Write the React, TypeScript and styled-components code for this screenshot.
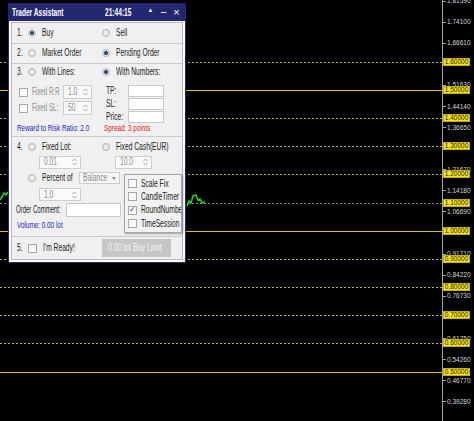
import React from 'react';
import styled, { createGlobalStyle } from 'styled-components';

const UI_FONT = `"Liberation Sans", Arial, sans-serif`;
const AXIS_FONT = `"Liberation Sans", "DejaVu Sans", sans-serif`;

const GlobalStyle = createGlobalStyle`
    html, body {
        margin: 0;
        padding: 0;
        background: #000;
    }
    body {
        overflow: hidden;
    }
    * {
        box-sizing: border-box;
    }
`;

// chart scale: 281.6px per 1.0 of price, 1.50000 sits at y = 90
const priceToY = (price: number) => 90 + (1.5 - price) * 281.6;

const LEVELS = [1.6, 1.5, 1.4, 1.3, 1.2, 1.1, 1.0, 0.9, 0.8, 0.7, 0.6, 0.5];
const TICKS = Array.from({ length: 20 }, (_, i) => 1.8159 - i * 0.0749).filter(
    (tick) => !LEVELS.some((level) => Math.abs(priceToY(level) - priceToY(tick)) < 3.5)
);

type LevelKind = 'solid' | 'dotted' | 'muted';

const levelKind = (price: number): LevelKind => {
    const tenth = Math.round(price * 10);
    if (tenth % 5 === 0) return 'solid';
    if (tenth === 11) return 'muted';
    return 'dotted';
};

/* ---------- chart ---------- */

const Chart = styled.div`
    position: relative;
    display: flex;
    width: 474px;
    height: 421px;
    background: #000;
    overflow: hidden;
`;

const Plot = styled.div`
    position: relative;
    flex: 0 0 442px;
`;

const Axis = styled.div`
    position: relative;
    flex: 1;
    border-left: 1px solid #a3a3a3;
`;

const LevelLine = styled.div<{ $kind: LevelKind }>`
    position: absolute;
    left: 0;
    right: 0;
    height: 1px;
    background: ${({ $kind }) =>
        $kind === 'solid'
            ? '#d6bf1c'
            : `repeating-linear-gradient(90deg, ${
                  $kind === 'muted' ? '#8f8f7a' : '#c2ae42'
              } 0 2px, transparent 2px 4px)`};
`;

const Candles = styled.svg`
    position: absolute;
    left: 0;
    top: 0;
`;

const Tick = styled.div`
    position: absolute;
    left: 0;
    display: flex;
    align-items: center;
    gap: 1px;
    height: 8px;
    margin-top: -4px;
    color: #d4d4d4;
    font: 6.5px/8px ${AXIS_FONT};
    white-space: nowrap;

    &::before {
        content: '';
        width: 3px;
        height: 1px;
        background: #a3a3a3;
    }
`;

const PriceTag = styled.div`
    position: absolute;
    left: 0;
    width: 27px;
    height: 8px;
    margin-top: -4px;
    display: flex;
    align-items: center;
    justify-content: center;
    background: #f3e227;
    border: 1px solid #c4ac00;
    color: #1b1b00;
    font: 6.5px/1 ${AXIS_FONT};
`;

/* ---------- trader window ---------- */

// the terminal draws its dialog text in a tightly condensed face
const Txt = styled.span<{ $sx?: number }>`
    display: inline-block;
    flex: 0 1 auto;
    min-width: 0;
    white-space: nowrap;
    transform: scaleX(${({ $sx }) => $sx ?? 0.67});
    transform-origin: left center;
`;

const Window = styled.div`
    position: absolute;
    left: 8px;
    top: 3px;
    width: 178px;
    border: 1px solid #22276f;
    background: #fdfdfd;
    font: 10px/1 ${UI_FONT};
    color: #1e1e1e;
`;

const TitleBar = styled.div`
    display: flex;
    align-items: center;
    height: 17px;
    padding: 0 2px 0 3px;
    background: #22276f;
    color: #fff;
    font-size: 11px;
    font-weight: bold;
`;

const TitleText = styled.div`
    flex: 0 0 93px;
    display: flex;
`;

const TitleButtons = styled.div`
    display: flex;
    margin-left: auto;
`;

const TitleButton = styled.span<{ $size: number }>`
    width: 13px;
    text-align: center;
    font-size: ${({ $size }) => $size}px;
    font-weight: normal;
`;

const Body = styled.div`
    padding: 1px 2px 2px;
`;

const Frame = styled.div`
    border: 1px solid #bababa;
    background: #f0f0f0;
`;

const Section = styled.div<{ $h: number; $last?: boolean }>`
    height: ${({ $h }) => $h}px;
    padding-left: 5px;
    border-bottom: ${({ $last }) => ($last ? 'none' : '1px solid #cacaca')};
`;

const OptionRow = styled.div<{ $h?: number; $top?: number }>`
    display: grid;
    grid-template-columns: 11px 74px 1fr;
    align-items: center;
    height: ${({ $h }) => $h ?? 16}px;
    margin-top: ${({ $top }) => $top ?? 0}px;
`;

const Option = styled.label<{ $width?: number }>`
    display: flex;
    align-items: center;
    gap: 6px;
    white-space: nowrap;
    ${({ $width }) => ($width ? `flex: none; width: ${$width}px;` : '')}
`;

const Radio = styled.span<{ $on?: boolean }>`
    flex: none;
    width: 8px;
    height: 8px;
    border-radius: 50%;
    border: 1px solid #b6b6b6;
    background: ${({ $on }) =>
        $on
            ? 'radial-gradient(circle, #35506b 0 1.8px, #dde5ec 2.3px)'
            : 'radial-gradient(circle, #ececec 0 2px, #dcdcdc 3px)'};
`;

const Check = styled.span`
    flex: none;
    display: flex;
    align-items: center;
    justify-content: center;
    width: 9px;
    height: 9px;
    border: 1px solid #a8a8a8;
    background: #fafafa;
    color: #2b3f8c;
    font-size: 8px;
`;

const Spin = styled.div<{ $w: number; $h?: number; $left?: number }>`
    display: flex;
    align-items: center;
    justify-content: space-between;
    width: ${({ $w }) => $w}px;
    height: ${({ $h }) => $h ?? 13}px;
    margin-left: ${({ $left }) => $left ?? 0}px;
    padding: 0 3px 0 4px;
    border: 1px solid #cdcdcd;
    background: #f9f9f9;
    color: #8d8d8d;
`;

const Split = styled.div`
    display: grid;
    grid-template-columns: 85px 1fr;
    margin-top: 4px;
`;

const LeftStack = styled.div`
    padding-left: 2px;
`;

const CheckRow = styled.div`
    display: grid;
    grid-template-columns: 13px 31px 29px;
    align-items: center;
    height: 16px;
    color: #8f8f8f;
`;

const RightStack = styled.div`
    padding-left: 4px;
`;

const FieldRow = styled.div`
    display: grid;
    grid-template-columns: 22px 36px;
    align-items: center;
    height: 13px;
`;

const TextBox = styled.div<{ $w: number; $h: number }>`
    flex: none;
    width: ${({ $w }) => $w}px;
    height: ${({ $h }) => $h}px;
    border: 1px solid #c9c9c9;
    background: #fff;
`;

const InfoRow = styled.div`
    display: grid;
    grid-template-columns: 87px 1fr;
    align-items: center;
    height: 10px;
`;

const Note = styled(Txt)<{ $tone: 'blue' | 'red' }>`
    color: ${({ $tone }) => ($tone === 'blue' ? '#1f22c8' : '#e0231f')};
    font-size: 9.5px;
`;

const FlowRow = styled.div<{ $h: number; $top: number; $left: number }>`
    display: flex;
    align-items: center;
    height: ${({ $h }) => $h}px;
    margin-top: ${({ $top }) => $top}px;
    padding-left: ${({ $left }) => $left}px;
`;

const Select = styled.div`
    display: flex;
    align-items: center;
    width: 41px;
    height: 12px;
    padding: 0 3px;
    border: 1px solid #cdcdcd;
    background: #f7f7f7;
    color: #8d8d8d;
`;

const Caret = styled.span`
    flex: none;
    margin-left: auto;
    width: 0;
    height: 0;
    border-left: 2.5px solid transparent;
    border-right: 2.5px solid transparent;
    border-top: 3px solid #8d8d8d;
`;

const CommentLabel = styled.div`
    flex: none;
    display: flex;
    width: 50px;
    margin-left: -1px;
`;

const ActionButton = styled.div`
    display: flex;
    align-items: center;
    width: 69px;
    height: 18px;
    padding-left: 6px;
    background: #c6c6c6;
    color: #f4f4f4;
    white-space: pre;
`;

/* ---------- indicators popup ---------- */

const Popup = styled.div`
    position: absolute;
    left: 124px;
    top: 174px;
    width: 58px;
    height: 59px;
    padding: 2px 0 0 3px;
    overflow: hidden;
    background: #f2f2f2;
    border: 1px solid #a6a6a6;
    box-shadow: 1px 1px 2px rgba(0, 0, 0, 0.35);
    font: 10px/1 ${UI_FONT};
    color: #222;
`;

const PopupItem = styled.div`
    display: flex;
    align-items: center;
    gap: 4px;
    height: 13.3px;
`;

const SpinArrows: React.FC = () => (
    <svg width="5" height="8" viewBox="0 0 5 8" style={{ flex: 'none' }}>
        <path d="M0.5 3 L2.5 1 L4.5 3 M0.5 5 L2.5 7 L4.5 5" stroke="#9c9c9c" strokeWidth="0.9" fill="none" />
    </svg>
);

const SpinBox: React.FC<{ value: string; w: number; h?: number; left?: number }> = ({ value, w, h, left }) => (
    <Spin $w={w} $h={h} $left={left}>
        <Txt>{value}</Txt>
        <SpinArrows />
    </Spin>
);

const Choice: React.FC<{ label: string; on?: boolean; width?: number }> = ({ label, on, width }) => (
    <Option $width={width}>
        <Radio $on={on} />
        <Txt>{label}</Txt>
    </Option>
);

const INDICATORS = [
    { name: 'Scale Fix', on: false },
    { name: 'CandleTimer', on: false },
    { name: 'RoundNumber', on: true },
    { name: 'TimeSession', on: false },
];

const TraderAssistant: React.FC = () => (
    <Window>
        <TitleBar>
            <TitleText>
                <Txt $sx={0.6}>Trader Assistant</Txt>
            </TitleText>
            <Txt $sx={0.6}>21:44:15</Txt>
            <TitleButtons>
                <TitleButton $size={6}>▲</TitleButton>
                <TitleButton $size={10}>–</TitleButton>
                <TitleButton $size={11}>×</TitleButton>
            </TitleButtons>
        </TitleBar>
        <Body>
            <Frame>
                <Section $h={21}>
                    <OptionRow $h={19}>
                        <Txt>1.</Txt>
                        <Choice label="Buy" on />
                        <Choice label="Sell" />
                    </OptionRow>
                </Section>
                <Section $h={20}>
                    <OptionRow $h={18}>
                        <Txt>2.</Txt>
                        <Choice label="Market Order" />
                        <Choice label="Pending Order" on />
                    </OptionRow>
                </Section>
                <Section $h={73}>
                    <OptionRow>
                        <Txt>3.</Txt>
                        <Choice label="With Lines:" />
                        <Choice label="With Numbers:" on />
                    </OptionRow>
                    <Split>
                        <LeftStack>
                            <CheckRow>
                                <Check />
                                <Txt $sx={0.62}>Fixed R:R</Txt>
                                <SpinBox value="1.0" w={29} h={14} />
                            </CheckRow>
                            <CheckRow>
                                <Check />
                                <Txt $sx={0.62}>Fixed SL:</Txt>
                                <SpinBox value="50" w={29} h={14} />
                            </CheckRow>
                        </LeftStack>
                        <RightStack>
                            <FieldRow>
                                <Txt>TP:</Txt>
                                <TextBox $w={36} $h={12} />
                            </FieldRow>
                            <FieldRow>
                                <Txt>SL:</Txt>
                                <TextBox $w={36} $h={12} />
                            </FieldRow>
                            <FieldRow>
                                <Txt>Price:</Txt>
                                <TextBox $w={36} $h={12} />
                            </FieldRow>
                        </RightStack>
                    </Split>
                    <InfoRow>
                        <Note $tone="blue">Reward to Risk Ratio: 2.0</Note>
                        <Note $tone="red">Spread: 3 points</Note>
                    </InfoRow>
                </Section>
                <Section $h={98}>
                    <OptionRow $top={2}>
                        <Txt>4.</Txt>
                        <Choice label="Fixed Lot:" />
                        <Choice label="Fixed Cash(EUR)" />
                    </OptionRow>
                    <OptionRow $h={14}>
                        <span />
                        <SpinBox value="0.01" w={42} left={11} />
                        <SpinBox value="10.0" w={37} left={13} />
                    </OptionRow>
                    <FlowRow $h={14} $top={2} $left={11}>
                        <Choice label="Percent of" width={51} />
                        <Select>
                            <Txt>Balance</Txt>
                            <Caret />
                        </Select>
                    </FlowRow>
                    <FlowRow $h={13} $top={3} $left={22}>
                        <SpinBox value="1.0" w={42} />
                    </FlowRow>
                    <FlowRow $h={15} $top={1} $left={0}>
                        <CommentLabel>
                            <Txt $sx={0.6}>Order Comment:</Txt>
                        </CommentLabel>
                        <TextBox $w={55} $h={14} />
                    </FlowRow>
                    <FlowRow $h={13} $top={1} $left={0}>
                        <Note $tone="blue">Volume: 0.00 lot</Note>
                    </FlowRow>
                </Section>
                <Section $h={22} $last>
                    <OptionRow $h={22}>
                        <Txt>5.</Txt>
                        <Option>
                            <Check />
                            <Txt>I'm Ready!</Txt>
                        </Option>
                        <ActionButton>
                            <Txt $sx={0.7}>{'0.00 lot  Buy Limit'}</Txt>
                        </ActionButton>
                    </OptionRow>
                </Section>
            </Frame>
        </Body>
    </Window>
);

const App: React.FC = () => (
    <>
        <GlobalStyle />
        <Chart>
            <Plot>
                {LEVELS.map((level) => (
                    <LevelLine key={level} $kind={levelKind(level)} style={{ top: Math.round(priceToY(level)) }} />
                ))}
                <Candles width="442" height="421" viewBox="0 0 442 421">
                    <polyline points="0,200 2,197 4,193 6,195 8,192" stroke="#27d027" strokeWidth="1.6" fill="none" />
                    <polyline
                        points="187,206 189,201 191,203 193,196 196,195 198,200 200,199 202,203 205,202"
                        stroke="#27d027"
                        strokeWidth="1.6"
                        fill="none"
                    />
                </Candles>
            </Plot>
            <Axis>
                {TICKS.map((tick) => (
                    <Tick key={tick} style={{ top: priceToY(tick) }}>
                        {tick.toFixed(5)}
                    </Tick>
                ))}
                {LEVELS.map((level) => (
                    <PriceTag key={level} style={{ top: Math.round(priceToY(level)) }}>
                        {level.toFixed(5)}
                    </PriceTag>
                ))}
            </Axis>
            <TraderAssistant />
            <Popup>
                {INDICATORS.map((item) => (
                    <PopupItem key={item.name}>
                        <Check>{item.on ? '✓' : ''}</Check>
                        <Txt>{item.name}</Txt>
                    </PopupItem>
                ))}
            </Popup>
        </Chart>
    </>
);

export default App;
